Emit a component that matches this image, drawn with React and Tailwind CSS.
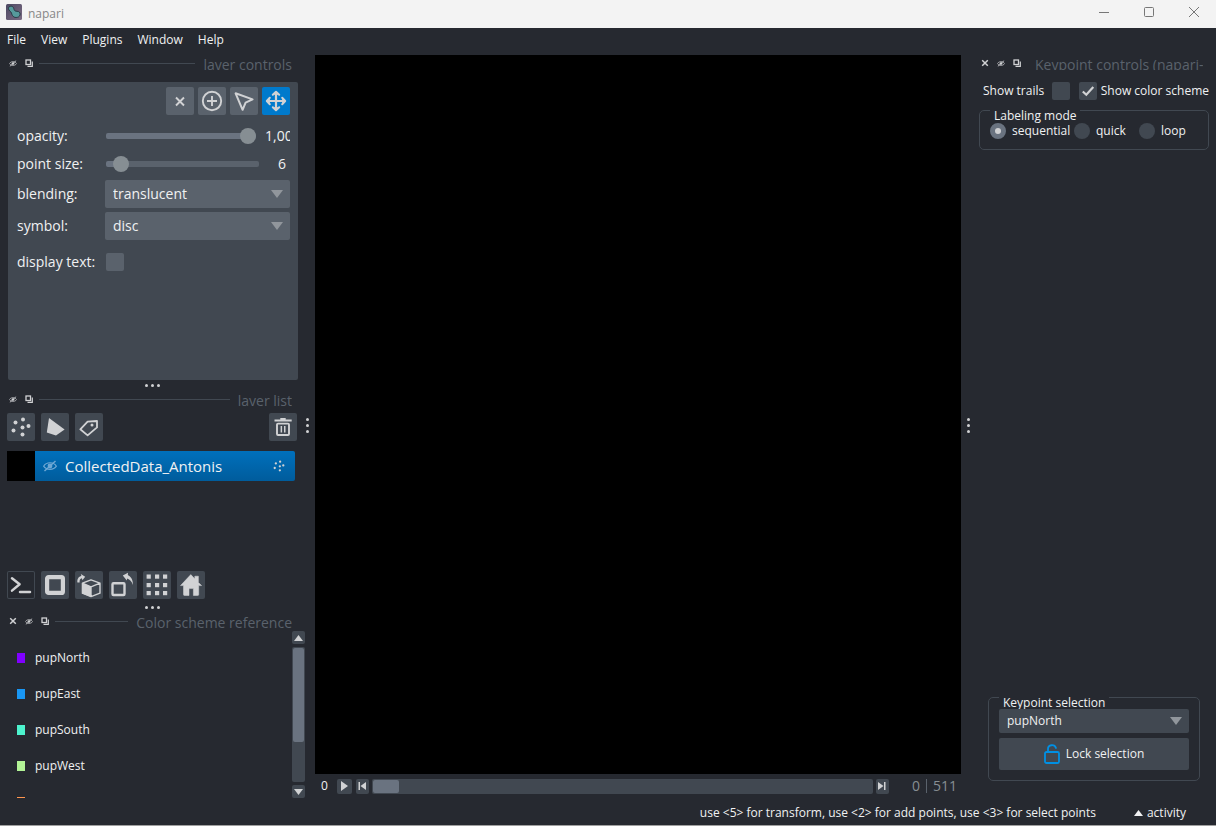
import React, { useState } from "react";

/* ---------- icons (28x28 grid, same as the tool buttons) ---------- */

function Icon({ children, className = "size-7" }) {
  return (
    <svg viewBox="0 0 28 28" className={className} fill="currentColor" stroke="none" aria-hidden="true">
      {children}
    </svg>
  );
}

const POINT_DOTS = [[8.5, 9.5], [16, 6.5], [21.5, 13], [15.5, 14.5], [6.5, 17.5], [15.5, 21.5]];

const icons = {
  remove: <path d="M10 10.5l8 8M18 10.5l-8 8" fill="none" stroke="currentColor" strokeWidth="1.9" />,
  add: (
    <g fill="none" stroke="currentColor" strokeWidth="1.9">
      <circle cx="14" cy="14" r="9.2" />
      <path d="M14 9v10M9 14h10" />
    </g>
  ),
  select: <path d="M5.6 6.3L22.6 12.4L15.6 15.6L12.6 22.8Z" fill="none" stroke="currentColor" strokeWidth="2" strokeLinejoin="round" />,
  move: (
    <g>
      <path d="M14 6v16M6 14h16" stroke="currentColor" strokeWidth="2.2" />
      <path d="M10.8 7.8L14 4.8l3.2 3M10.8 20.2L14 23.2l3.2-3M7.8 10.8L4.8 14l3 3.2M20.2 10.8l3 3.2l-3 3.2" fill="currentColor" stroke="currentColor" strokeWidth="2" strokeLinecap="round" strokeLinejoin="round" />
    </g>
  ),
  points: POINT_DOTS.map(([x, y]) => <circle key={`${x}-${y}`} cx={x} cy={y} r="2" />),
  shapes: <path d="M8 5L23.6 16.5L15 22.5L5.8 19.5Z" />,
  labels: (
    <g>
      <path d="M5.3 16.3L12.6 8.6L22 8L22 14.4L12.6 22.4Z" fill="none" stroke="currentColor" strokeWidth="1.8" strokeLinejoin="round" />
      <circle cx="17" cy="12" r="1.5" />
    </g>
  ),
  trash: (
    <g>
      <path d="M5.5 6.4h5.8V5h5.4v1.4h6v2.1H5.5z" />
      <rect x="8" y="10.6" width="12" height="11.4" rx="1" fill="none" stroke="currentColor" strokeWidth="1.9" />
      <path d="M11.6 13h1.5v6.6h-1.5zM15 13h1.5v6.6H15z" />
    </g>
  ),
  console: <path d="M5 7.2L12.6 13.2L5 19.6M13 21H23" fill="none" stroke="currentColor" strokeWidth="2.5" strokeLinecap="round" strokeLinejoin="round" />,
  display2d: <rect x="6.1" y="6.1" width="15.8" height="15.8" rx="1.5" fill="none" stroke="currentColor" strokeWidth="4.2" />,
  roll: (
    <g>
      <path d="M7 12L16 15.7V26L7 22.4Z" />
      <path d="M7.4 12.2L16 8.8L25 12.2L16 15.8ZM25 12.2V22.2L16 25.6V15.8M7.4 12.2v10l8.6 3.4" fill="none" stroke="currentColor" strokeWidth="1.4" strokeLinejoin="round" />
      <path d="M2.4 11.5C2 8 3.6 5.5 6.4 5L5.8 3L10.2 5.8L7.4 9.2L6.9 7.3C5.2 7.7 4.4 9 4.6 11.5Z" />
    </g>
  ),
  transpose: (
    <g>
      <rect x="3.5" y="12.2" width="12" height="11.8" rx="1" fill="none" stroke="currentColor" strokeWidth="2.4" />
      <path d="M13.8 4.6L19 1.8L18.8 4C22 5.5 23.9 8.6 24 14C22.6 10.6 20.9 8.6 18.2 7.6L17.8 9.4Z" />
    </g>
  ),
  grid: [3.5, 12, 20].map((y) =>
    [3.6, 12, 20].map((x) => <rect key={`${x}-${y}`} x={x} y={y} width="4.2" height="4.2" />)
  ),
  home: (
    <path d="M13.8 3.6L17.8 7.8V5.2H21.4V11.4L24.6 14.6H21.7V23.5Q21.7 24.5 20.7 24.5H16.4V17.6H12V24.5H7.5Q6.5 24.5 6.5 23.5V14.6H3.5Z" strokeLinejoin="round" stroke="currentColor" strokeWidth="0.5" />
  ),
};

function HiddenEye({ className }) {
  return (
    <svg viewBox="0 0 14 12" className={className} fill="none" stroke="currentColor" aria-hidden="true">
      <path d="M0.6 6.2C3.5 1.6 10.5 1.6 13.4 6.2C10.5 10.4 3.5 10.4 0.6 6.2Z" strokeWidth="1.2" />
      <circle cx="7" cy="6" r="2.4" fill="currentColor" stroke="none" />
      <path d="M1.5 11L12.5 1" strokeWidth="1.4" />
    </svg>
  );
}

function Triangle({ className, points }) {
  return (
    <svg viewBox="0 0 12 8" className={className} fill="currentColor" aria-hidden="true">
      <polygon points={points} />
    </svg>
  );
}

/* ---------- small shared parts ---------- */

function ToolButton({ icon, label, className = "bg-[#414851]" }) {
  return (
    <button type="button" aria-label={label} className={`size-7 shrink-0 rounded-[2px] text-[#d1d2d4] ${className}`}>
      <Icon>{icons[icon]}</Icon>
    </button>
  );
}

function DockTitle({ title, closable = false, lineClass = "flex-1" }) {
  return (
    <div className="flex h-4 shrink-0 items-center gap-1 text-[#d1d2d4]">
      {closable && (
        <button type="button" aria-label={`Close ${title}`} className="flex size-3 shrink-0 items-center justify-center">
          <svg viewBox="0 0 8 8" className="size-2" fill="none" stroke="currentColor" strokeWidth="1.5">
            <path d="M1.2 1.2l5.6 5.6M6.8 1.2l-5.6 5.6" />
          </svg>
        </button>
      )}
      <button type="button" aria-label={`Hide ${title}`} className="flex size-3 shrink-0 items-center justify-center">
        <HiddenEye className="h-[7px] w-2" />
      </button>
      <button type="button" aria-label={`Float ${title}`} className="flex size-3 shrink-0 items-center justify-center">
        <svg viewBox="0 0 8 8" className="size-2" fill="none" stroke="currentColor">
          <rect x="1" y="1" width="4.5" height="4.5" strokeWidth="1.3" />
          <path d="M7.3 2.5v4.8H2.5" strokeWidth="1.2" />
        </svg>
      </button>
      <div className={`h-px bg-[#414851] ${lineClass}`} />
      <h2 className="ml-1 h-[15px] self-start overflow-hidden text-sm leading-5 whitespace-nowrap text-[#5a626c]">{title}</h2>
    </div>
  );
}

function Dots({ vertical = false }) {
  return (
    <div className={`flex gap-[3px] ${vertical ? "flex-col" : ""}`}>
      <i className="size-[3px] rounded-full bg-[#d1d2d4]" />
      <i className="size-[3px] rounded-full bg-[#d1d2d4]" />
      <i className="size-[3px] rounded-full bg-[#d1d2d4]" />
    </div>
  );
}

function Select({ id, options, className, size }) {
  return (
    <div className="relative flex flex-1">
      <select id={id} className={`w-full appearance-none rounded-[2px] px-2 outline-none ${size} ${className}`}>
        {options.map((o) => (
          <option key={o}>{o}</option>
        ))}
      </select>
      <Triangle points="0,0 12,0 6,8" className="pointer-events-none absolute top-1/2 right-[7px] h-2 w-3 -translate-y-1/2 text-[#91969c]" />
    </div>
  );
}

function Slider({ id, min, max, step, value, onChange }) {
  const pct = ((value - min) / (max - min)) * 100;
  return (
    <input
      id={id}
      type="range"
      min={min}
      max={max}
      step={step}
      value={value}
      onChange={(e) => onChange(Number(e.target.value))}
      style={{ backgroundImage: `linear-gradient(to right, #6a7380 ${pct}%, #5a626c ${pct}%)` }}
      className="h-[6px] w-full appearance-none rounded-[2px] [&::-webkit-slider-thumb]:size-4 [&::-webkit-slider-thumb]:appearance-none [&::-webkit-slider-thumb]:rounded-full [&::-webkit-slider-thumb]:bg-[#868e93]"
    />
  );
}

function CheckBox({ id, checked, onChange, className = "bg-[#414851]" }) {
  return (
    <span className="relative flex size-[18px] shrink-0">
      <input id={id} type="checkbox" checked={checked} onChange={() => onChange(!checked)} className={`size-[18px] appearance-none rounded-[2px] ${className}`} />
      {checked && (
        <svg viewBox="0 0 18 18" className="pointer-events-none absolute inset-0" fill="none" stroke="#d1d2d4" strokeWidth="2.2">
          <path d="M3.8 9.5L7.3 12.8L14.3 5" />
        </svg>
      )}
    </span>
  );
}

/* ---------- window chrome ---------- */

function TitleBar() {
  return (
    <header className="flex h-7 shrink-0 items-center bg-[#f3f3f3] pl-[6px] text-[#868686]">
      <svg viewBox="0 0 16 16" className="mb-1 size-4" aria-hidden="true">
        <defs>
          <linearGradient id="logo-bg" x1="0" y1="0" x2="1" y2="1">
            <stop offset="0" stopColor="#4c4862" />
            <stop offset="1" stopColor="#7b6b83" />
          </linearGradient>
        </defs>
        <rect width="16" height="16" rx="1.5" fill="url(#logo-bg)" />
        <path d="M2.5 4.5C2.5 1.5 7 1.3 7.7 4.3C8.2 6.5 9 7.4 11 7.3C15 7.2 15.2 12.5 11.5 13.3C7.5 14.2 6 11.5 5.5 9C5 7.3 2.6 6.8 2.5 4.5Z" fill="#569a9c" stroke="#22343f" strokeWidth="0.9" />
      </svg>
      <span className="ml-[6px] text-xs">napari</span>
      <div className="mb-1 ml-auto flex text-[#777]">
        <button type="button" aria-label="Minimize" className="flex w-[45px] justify-center">
          <svg viewBox="0 0 10 10" className="size-[10px]" stroke="currentColor"><path d="M0 5.5h10" /></svg>
        </button>
        <button type="button" aria-label="Maximize" className="flex w-[45px] justify-center">
          <svg viewBox="0 0 10 10" className="size-[10px]" fill="none" stroke="currentColor"><rect x="0.5" y="0.5" width="9" height="9" rx="1" /></svg>
        </button>
        <button type="button" aria-label="Close" className="flex w-[45px] justify-center">
          <svg viewBox="0 0 10 10" className="size-[10px]" stroke="currentColor"><path d="M0 0l10 10M10 0L0 10" /></svg>
        </button>
      </div>
    </header>
  );
}

function MenuBar() {
  return (
    <nav className="flex h-[27px] shrink-0 gap-[15px] pl-[7px] text-xs leading-6">
      {["File", "View", "Plugins", "Window", "Help"].map((m) => (
        <a key={m} href="#">{m}</a>
      ))}
    </nav>
  );
}

/* ---------- left dock ---------- */

function LayerControls() {
  const [opacity, setOpacity] = useState(1);
  const [pointSize, setPointSize] = useState(6);
  const [displayText, setDisplayText] = useState(false);
  const row = "grid h-7 grid-cols-[88px_1fr] items-center";

  return (
    <section className="mt-[11px] mr-[7px] ml-px h-[298px] shrink-0 rounded-[2px] bg-[#414851] pt-[5px] pr-2 pl-[9px] text-sm">
      <div className="mb-[7px] flex justify-end gap-1">
        <ToolButton icon="remove" label="Delete selected points" className="bg-[#5a626c]" />
        <ToolButton icon="add" label="Add points" className="bg-[#5a626c]" />
        <ToolButton icon="select" label="Select points" className="bg-[#5a626c]" />
        <ToolButton icon="move" label="Pan/zoom" className="bg-[#007acc]" />
      </div>
      <div className={row}>
        <label htmlFor="opacity">opacity:</label>
        <div className="grid grid-cols-[150px_25px] items-center gap-[9px] pl-px">
          <Slider id="opacity" min={0} max={1} step={0.01} value={opacity} onChange={setOpacity} />
          <output htmlFor="opacity" className="overflow-hidden">{opacity.toFixed(2).replace(".", ",")}</output>
        </div>
      </div>
      <div className={row}>
        <label htmlFor="point-size">point size:</label>
        <div className="grid grid-cols-[153px_1fr] items-center pl-px">
          <Slider id="point-size" min={1} max={100} step={1} value={pointSize} onChange={setPointSize} />
          <output htmlFor="point-size" className="pr-1 text-right">{pointSize}</output>
        </div>
      </div>
      <div className={`mt-[2px] ${row}`}>
        <label htmlFor="blending">blending:</label>
        <Select id="blending" size="h-7" className="bg-[#5a626c]" options={["translucent", "additive", "opaque"]} />
      </div>
      <div className={`mt-1 ${row}`}>
        <label htmlFor="symbol">symbol:</label>
        <Select id="symbol" size="h-7" className="bg-[#5a626c]" options={["disc", "cross", "square"]} />
      </div>
      <div className={`mt-2 ${row}`}>
        <label htmlFor="display-text" className="whitespace-nowrap">display text:</label>
        <div className="pl-px">
          <CheckBox id="display-text" checked={displayText} onChange={setDisplayText} className="bg-[#5a626c]" />
        </div>
      </div>
    </section>
  );
}

function LayerList() {
  return (
    <section className="flex min-h-0 flex-1 flex-col pt-[6px] pr-2">
      <div className="flex gap-[6px]">
        <ToolButton icon="points" label="New points layer" />
        <ToolButton icon="shapes" label="New shapes layer" />
        <ToolButton icon="labels" label="New labels layer" />
        <ToolButton icon="trash" label="Delete selected layers" className="ml-auto bg-[#414851]" />
      </div>
      <ul className="mt-[10px] mr-[2px] flex-1">
        <li className="flex h-[30px] items-center overflow-hidden rounded-r-[2px] bg-linear-to-b from-[#0070bc] to-[#005c9c] pr-2">
          <div className="h-full w-7 bg-black" />
          <button type="button" aria-label="Toggle visibility" className="mx-[7px] text-[#6fa8d4]">
            <HiddenEye className="h-3 w-4" />
          </button>
          <span className="text-[15px]">CollectedData_Antonis</span>
          <Icon className="ml-auto size-4 text-[#d1d2d4]">{icons.points}</Icon>
        </li>
      </ul>
      <div className="flex gap-[6px]">
        <ToolButton icon="console" label="Console" className="bg-[#262930] inset-ring inset-ring-[#414851]" />
        <ToolButton icon="display2d" label="Toggle 2D/3D" />
        <ToolButton icon="roll" label="Roll dimensions" />
        <ToolButton icon="transpose" label="Transpose dimensions" />
        <ToolButton icon="grid" label="Grid mode" />
        <ToolButton icon="home" label="Reset view" />
      </div>
    </section>
  );
}

const keypoints = [
  { name: "pupNorth", color: "bg-[#8000ff]" },
  { name: "pupEast", color: "bg-[#1996f3]" },
  { name: "pupSouth", color: "bg-[#4df3ce]" },
  { name: "pupWest", color: "bg-[#b2f396]" },
  { name: "", color: "bg-[#ff964f]" },
];

function ColorSchemeReference() {
  return (
    <section className="flex h-[171px] shrink-0 py-[2px]">
      <ul className="flex-1 overflow-hidden pt-[9px] pl-[10px] text-xs">
        {keypoints.map((k) => (
          <li key={k.color} className="flex h-9 items-center gap-[10px]">
            <i className={`h-[10px] w-2 ${k.color}`} />
            {k.name}
          </li>
        ))}
      </ul>
      <div className="flex w-[13px] flex-col gap-[3px] text-[#d1d2d4]">
        <button type="button" aria-label="Scroll up" className="flex size-[13px] items-center justify-center rounded-[2px] bg-[#414851]">
          <Triangle points="0,8 12,8 6,0" className="h-[6px] w-[9px]" />
        </button>
        <div className="flex-1 rounded-[2px] bg-[#414851] p-px">
          <div className="h-[71%] rounded-[2px] bg-[#6a7380]" />
        </div>
        <button type="button" aria-label="Scroll down" className="flex size-[13px] items-center justify-center rounded-[2px] bg-[#414851]">
          <Triangle points="0,0 12,0 6,8" className="h-[6px] w-[9px]" />
        </button>
      </div>
    </section>
  );
}

/* ---------- centre ---------- */

function Viewer() {
  const [frame, setFrame] = useState(0);
  const stepButton = "flex h-[15px] shrink-0 items-center justify-center rounded-[2px] bg-[#414851] text-[#d1d2d4]";

  return (
    <main className="flex min-w-0 flex-1 flex-col">
      <div className="flex-1 bg-black" />
      <div className="flex h-[26px] shrink-0 items-center pr-1 pb-[2px] pl-[6px]">
        <label htmlFor="dims" className="text-xs">0</label>
        <button type="button" aria-label="Play" className={`ml-[9px] w-[15px] ${stepButton}`}>
          <svg viewBox="0 0 8 10" className="h-[10px] w-2" fill="currentColor"><path d="M1 0L8 5L1 10Z" /></svg>
        </button>
        <button type="button" aria-label="Previous frame" className={`ml-1 w-[13px] ${stepButton}`}>
          <svg viewBox="0 0 8 8" className="size-2" fill="currentColor"><path d="M0.5 0H2V8H0.5ZM8 0V8L2.5 4Z" /></svg>
        </button>
        <input
          id="dims"
          type="range"
          min="0"
          max="511"
          value={frame}
          onChange={(e) => setFrame(Number(e.target.value))}
          className="mx-[3px] h-[15px] min-w-0 flex-1 appearance-none rounded-[2px] bg-[#414851] px-px [&::-webkit-slider-thumb]:h-[13px] [&::-webkit-slider-thumb]:w-[26px] [&::-webkit-slider-thumb]:appearance-none [&::-webkit-slider-thumb]:rounded-[2px] [&::-webkit-slider-thumb]:bg-[#6a7380]"
        />
        <button type="button" aria-label="Next frame" className={`w-[13px] ${stepButton}`}>
          <svg viewBox="0 0 8 8" className="size-2" fill="currentColor"><path d="M7.5 0H6V8H7.5ZM0 0V8L5.5 4Z" /></svg>
        </button>
        <div className="ml-[23px] flex items-center gap-[6px] text-sm text-[#868e93]">
          <span>{frame}</span>
          <i className="h-[14px] w-px bg-[#5a626c]" />
          <span>511</span>
        </div>
      </div>
    </main>
  );
}

/* ---------- right dock ---------- */

const legend = "px-1 pt-3 text-xs leading-3";

function KeypointControls() {
  const [trails, setTrails] = useState(false);
  const [scheme, setScheme] = useState(true);
  const [mode, setMode] = useState("sequential");

  return (
    <aside className="flex w-[241px] shrink-0 flex-col pr-[7px] pl-1 text-xs">
      <DockTitle title="Keypoint controls (napari-" closable lineClass="w-0" />
      <div className="mt-[13px] flex h-[14px] items-center justify-between whitespace-nowrap">
        <label htmlFor="trails" className="pl-1">Show trails</label>
        <CheckBox id="trails" checked={trails} onChange={setTrails} />
        <div className="flex items-center gap-1">
          <CheckBox id="scheme" checked={scheme} onChange={setScheme} />
          <label htmlFor="scheme">Show color scheme</label>
        </div>
      </div>
      <fieldset className="rounded-[5px] border border-[#414851] px-[10px] pb-[10px]">
        <legend className={legend}>Labeling mode</legend>
        <div className="grid grid-cols-[84px_65px_auto] pt-px">
          {["sequential", "quick", "loop"].map((m) => (
            <label key={m} className="flex items-center gap-[6px] leading-4">
              <input
                type="radio"
                name="mode"
                checked={mode === m}
                onChange={() => setMode(m)}
                className="size-4 shrink-0 appearance-none rounded-full bg-[#414851] checked:border-5 checked:border-[#6a7380] checked:bg-[#d1d2d4]"
              />
              {m}
            </label>
          ))}
        </div>
      </fieldset>
      <fieldset className="mx-[9px] mt-auto mb-[19px] rounded-[5px] border border-[#414851] px-[10px] pb-[10px]">
        <legend className={legend}>
          <label htmlFor="keypoint">Keypoint selection</label>
        </legend>
        <Select id="keypoint" size="h-6" className="bg-[#414851]" options={["pupNorth", "pupEast", "pupSouth", "pupWest"]} />
        <button type="button" className="mt-[5px] flex h-8 w-full items-center justify-center gap-[6px] rounded-[2px] bg-[#414851]">
          <svg viewBox="0 0 16 20" className="h-5 w-4" fill="none" stroke="#0090e4" strokeWidth="1.8" strokeLinecap="round">
            <rect x="1" y="8" width="14" height="11" rx="1.5" />
            <path d="M4 8V5C4 0.500 10.500 -0.200 12 4" />
          </svg>
          Lock selection
        </button>
      </fieldset>
    </aside>
  );
}

export default function App() {
  return (
    <div className="flex h-screen flex-col overflow-hidden border-b border-[#a0a0a0] bg-[#262930] font-['Open_Sans','Noto_Sans',sans-serif] text-[#f0f1f2]">
      <TitleBar />
      <MenuBar />
      <div className="flex min-h-0 flex-1">
        <aside className="flex w-[305px] shrink-0 flex-col pl-[7px]">
          <div className="pr-[13px]">
            <DockTitle title="layer controls" />
          </div>
          <LayerControls />
          <div className="flex h-[11px] shrink-0 items-center justify-center pr-2">
            <Dots />
          </div>
          <div className="pr-[13px]">
            <DockTitle title="layer list" />
          </div>
          <LayerList />
          <div className="flex h-[14px] shrink-0 items-center justify-center pt-[3px] pr-2">
            <Dots />
          </div>
          <div className="pr-[13px]">
            <DockTitle title="Color scheme reference" closable />
          </div>
          <ColorSchemeReference />
        </aside>
        <div className="flex w-[10px] shrink-0 items-center pb-1 pl-px">
          <Dots vertical />
        </div>
        <Viewer />
        <div className="flex w-[14px] shrink-0 items-center justify-center pb-1">
          <Dots vertical />
        </div>
        <KeypointControls />
      </div>
      <footer className="flex h-[25px] shrink-0 items-center justify-end gap-[38px] pr-[30px] text-xs">
        <span>use &lt;5&gt; for transform, use &lt;2&gt; for add points, use &lt;3&gt; for select points</span>
        <button type="button" className="flex items-center gap-1">
          <Triangle points="0,8 12,8 6,0" className="h-[6px] w-[9px]" />
          activity
        </button>
      </footer>
    </div>
  );
}
